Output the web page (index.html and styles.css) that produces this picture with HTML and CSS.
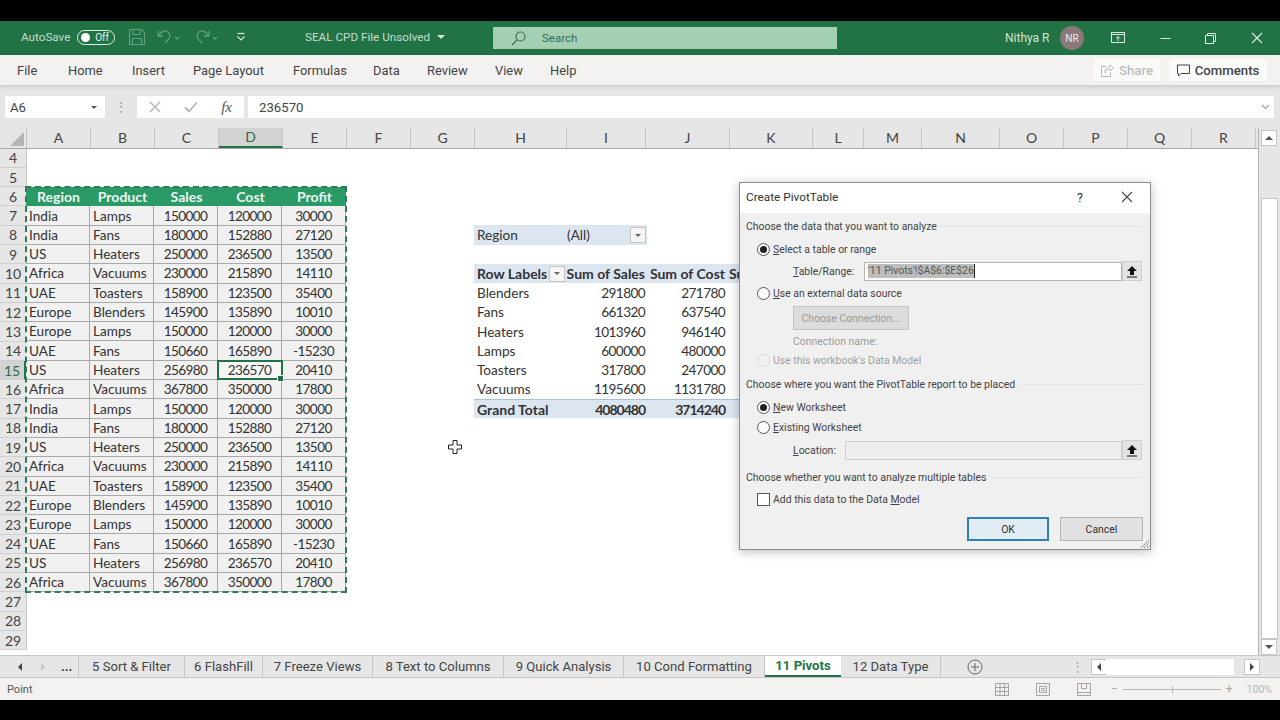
FILE: index.html
```html
<!DOCTYPE html>
<html lang="en">

<head>
    <meta charset="UTF-8">
    <meta name="viewport" content="width=device-width, initial-scale=1.0">
    <title>SEAL CPD File Unsolved - Excel</title>
    <link rel="stylesheet" href="styles.css">
</head>

<body>
    <div class="app">
        <!-- Title bar -->
        <header class="titlebar">
            <div class="qat">
                <span class="autosave">AutoSave</span>
                <span class="toggle"><i class="toggle-dot"></i><b>Off</b></span>
                <svg class="qat-save" width="18" height="18" viewBox="0 0 18 18" fill="none" stroke="#5f9e7d" stroke-width="1.2"><path d="M1.5 1.5h12l3 3v12h-15z"/><path d="M5 1.5v5h7v-5M4.500 16.500v-6h9v6"/></svg>
                <svg class="qat-undo" width="24" height="16" viewBox="0 0 24 16" fill="none" stroke="#5f9e7d" stroke-width="1.3"><path d="M1 2v5h5M1.500 7C4 2 8 1 10.500 2.500c3 2 3 6 .5 8.500l-3 3"/><path d="M18 8l2 2 2-2"/></svg>
                <svg class="qat-redo" width="24" height="16" viewBox="0 0 24 16" fill="none" stroke="#5f9e7d" stroke-width="1.3"><path d="M14 2v5h-5M13.500 7C11 2 7 1 4.500 2.500c-3 2-3 6-.5 8.500l3 3"/><path d="M18 8l2 2 2-2"/></svg>
                <svg class="qat-more" width="10" height="10" viewBox="0 0 10 10" fill="none" stroke="#d5e6dc" stroke-width="1.2"><path d="M1.500 1.500h7"/><path d="M1.500 4.500L5 8l3.500-3.500"/></svg>
            </div>
            <div class="doc-title">SEAL CPD File Unsolved <i class="caret"></i></div>
            <div class="search-box">
                <svg width="15" height="15" viewBox="0 0 15 15" fill="none" stroke="#3f6f55" stroke-width="1.2"><circle cx="9.500" cy="5.500" r="4.500"/><path d="M6 9l-5 5"/></svg>
                <span>Search</span>
            </div>
            <div class="user">
                <span class="user-name">Nithya R</span>
                <span class="avatar">NR</span>
            </div>
            <div class="win-buttons">
                <svg width="14" height="12" viewBox="0 0 14 12" fill="none" stroke="#dbe9e0"><rect x=".5" y=".5" width="13" height="10"/><path d="M.5 2.500h13M7 9V4.500M5 6.500l2-2 2 2"/></svg>
                <svg width="11" height="11" viewBox="0 0 11 11" fill="none" stroke="#dbe9e0"><path d="M.5 5.500h10"/></svg>
                <svg width="11" height="11" viewBox="0 0 11 11" fill="none" stroke="#dbe9e0"><rect x=".5" y="2.500" width="8" height="8"/><path d="M2.500 2.500v-2h8v8h-2"/></svg>
                <svg width="12" height="12" viewBox="0 0 12 12" fill="none" stroke="#e6f0ea" stroke-width="1.1"><path d="M1 1l10 10M11 1L1 11"/></svg>
            </div>
        </header>

        <!-- Ribbon tabs -->
        <nav class="ribbon">
            <ul class="ribbon-tabs">
                <li>File</li>
                <li>Home</li>
                <li>Insert</li>
                <li>Page Layout</li>
                <li>Formulas</li>
                <li>Data</li>
                <li>Review</li>
                <li>View</li>
                <li>Help</li>
            </ul>
            <button class="btn-share">
                <svg width="13" height="13" viewBox="0 0 13 13" fill="none" stroke="#bdbdbd"><path d="M9 .8l3.300 3L9 6.800V5C6 5 4.500 6.500 4 9c-.5-3 1-6 5-6.300z"/><path d="M5 2.500H.5v10h9V8"/></svg>
                Share
            </button>
            <button class="btn-comments">
                <svg width="13" height="13" viewBox="0 0 13 13" fill="none" stroke="#444"><path d="M.5 1h12v8.500H4L1.500 12V9.500h-1z"/></svg>
                Comments
            </button>
        </nav>

        <!-- Formula bar -->
        <div class="formula-area">
            <div class="name-box"><span>A6</span><i class="caret-small"></i></div>
            <div class="formula-dots">&#8942;</div>
            <div class="formula-btns">
                <svg width="12" height="12" viewBox="0 0 12 12" fill="none" stroke="#b5b5b5" stroke-width="1.4"><path d="M1 1l10 10M11 1L1 11"/></svg>
                <svg width="14" height="12" viewBox="0 0 14 12" fill="none" stroke="#b5b5b5" stroke-width="1.800"><path d="M1 6.500L5 10.500 13 1.500"/></svg>
                <span class="fx">fx</span>
            </div>
            <div class="formula-input">
                <span>236570</span>
                <svg width="9" height="6" viewBox="0 0 9 6" fill="none" stroke="#a8a8a8" stroke-width="1.400"><path d="M1 1l3.500 3.500L8 1"/></svg>
            </div>
        </div>

        <!-- Worksheet -->
        <div class="workbook">
            <div class="sheet-wrap">
                <div class="col-heads">
                    <div class="corner"><i></i></div>
                    <div class="col-letters">
                        <span>A</span><span>B</span><span>C</span><span class="current">D</span><span>E</span><span>F</span><span>G</span><span>H</span><span>I</span><span>J</span><span>K</span><span>L</span><span>M</span><span>N</span><span>O</span><span>P</span><span>Q</span><span>R</span>
                    </div>
                </div>
                <div class="sheet-body">
                    <div class="row-heads">
                        <span>4</span><span>5</span><span>6</span><span>7</span><span>8</span><span>9</span><span>10</span><span>11</span><span>12</span><span>13</span><span>14</span><span class="current">15</span><span>16</span><span>17</span><span>18</span><span>19</span><span>20</span><span>21</span><span>22</span><span>23</span><span>24</span><span>25</span><span>26</span><span>27</span><span>28</span><span>29</span>
                    </div>
                    <div class="cells">
                        <div class="data-table">
                            <div class="dt-row dt-head"><span>Region</span><span>Product</span><span>Sales</span><span>Cost</span><span>Profit</span></div>
                            <div class="dt-row"><span>India</span><span>Lamps</span><span>150000</span><span>120000</span><span>30000</span></div>
                            <div class="dt-row"><span>India</span><span>Fans</span><span>180000</span><span>152880</span><span>27120</span></div>
                            <div class="dt-row"><span>US</span><span>Heaters</span><span>250000</span><span>236500</span><span>13500</span></div>
                            <div class="dt-row"><span>Africa</span><span>Vacuums</span><span>230000</span><span>215890</span><span>14110</span></div>
                            <div class="dt-row"><span>UAE</span><span>Toasters</span><span>158900</span><span>123500</span><span>35400</span></div>
                            <div class="dt-row"><span>Europe</span><span>Blenders</span><span>145900</span><span>135890</span><span>10010</span></div>
                            <div class="dt-row"><span>Europe</span><span>Lamps</span><span>150000</span><span>120000</span><span>30000</span></div>
                            <div class="dt-row"><span>UAE</span><span>Fans</span><span>150660</span><span>165890</span><span>-15230</span></div>
                            <div class="dt-row"><span>US</span><span>Heaters</span><span>256980</span><span class="active-cell">236570</span><span>20410</span></div>
                            <div class="dt-row"><span>Africa</span><span>Vacuums</span><span>367800</span><span>350000</span><span>17800</span></div>
                            <div class="dt-row"><span>India</span><span>Lamps</span><span>150000</span><span>120000</span><span>30000</span></div>
                            <div class="dt-row"><span>India</span><span>Fans</span><span>180000</span><span>152880</span><span>27120</span></div>
                            <div class="dt-row"><span>US</span><span>Heaters</span><span>250000</span><span>236500</span><span>13500</span></div>
                            <div class="dt-row"><span>Africa</span><span>Vacuums</span><span>230000</span><span>215890</span><span>14110</span></div>
                            <div class="dt-row"><span>UAE</span><span>Toasters</span><span>158900</span><span>123500</span><span>35400</span></div>
                            <div class="dt-row"><span>Europe</span><span>Blenders</span><span>145900</span><span>135890</span><span>10010</span></div>
                            <div class="dt-row"><span>Europe</span><span>Lamps</span><span>150000</span><span>120000</span><span>30000</span></div>
                            <div class="dt-row"><span>UAE</span><span>Fans</span><span>150660</span><span>165890</span><span>-15230</span></div>
                            <div class="dt-row"><span>US</span><span>Heaters</span><span>256980</span><span>236570</span><span>20410</span></div>
                            <div class="dt-row"><span>Africa</span><span>Vacuums</span><span>367800</span><span>350000</span><span>17800</span></div>
                        </div>

                        <div class="pivot">
                            <div class="pv-row pv-filter"><span>Region</span><span>(All)</span><i class="dd-btn"></i></div>
                            <div class="pv-row"></div>
                            <div class="pv-row pv-head"><span>Row Labels<i class="dd-btn"></i></span><span>Sum of Sales</span><span>Sum of Cost</span><span>Su</span></div>
                            <div class="pv-row"><span>Blenders</span><span>291800</span><span>271780</span></div>
                            <div class="pv-row"><span>Fans</span><span>661320</span><span>637540</span></div>
                            <div class="pv-row"><span>Heaters</span><span>1013960</span><span>946140</span></div>
                            <div class="pv-row"><span>Lamps</span><span>600000</span><span>480000</span></div>
                            <div class="pv-row"><span>Toasters</span><span>317800</span><span>247000</span></div>
                            <div class="pv-row"><span>Vacuums</span><span>1195600</span><span>1131780</span></div>
                            <div class="pv-row pv-total"><span>Grand Total</span><span>4080480</span><span>3714240</span></div>
                        </div>
                    </div>
                </div>
            </div>
            <div class="vscroll">
                <button class="sb-btn"><i class="tri-up"></i></button>
                <div class="vs-track"></div>
                <div class="vs-thumb"></div>
                <button class="sb-btn"><i class="tri-down"></i></button>
            </div>
        </div>

        <!-- Sheet tabs -->
        <div class="tabbar">
            <div class="tab-nav">
                <i class="tri-left"></i><i class="tri-right faint"></i><b>...</b>
            </div>
            <ul class="sheet-tabs">
                <li class="t5">5 Sort &amp; Filter</li>
                <li class="t6">6 FlashFill</li>
                <li class="t7">7 Freeze Views</li>
                <li class="t8">8 Text to Columns</li>
                <li class="t9">9 Quick Analysis</li>
                <li class="t10">10 Cond Formatting</li>
                <li class="t11 active">11 Pivots</li>
                <li class="t12">12 Data Type</li>
            </ul>
            <svg class="add-sheet" width="16" height="16" viewBox="0 0 16 16" fill="none" stroke="#666"><circle cx="8" cy="8" r="7"/><path d="M8 4v8M4 8h8"/></svg>
            <div class="hscroll">
                <span class="hs-dots">&#8942;</span>
                <button class="sb-btn"><i class="tri-left"></i></button>
                <div class="hs-thumb"></div>
                <div class="hs-track"></div>
                <button class="sb-btn"><i class="tri-right"></i></button>
            </div>
        </div>

        <!-- Status bar -->
        <footer class="statusbar">
            <span class="status-text">Point</span>
            <div class="status-right">
                <svg width="14" height="13" viewBox="0 0 14 13" fill="none" stroke="#a3a3a3"><path d="M.5.500h13v12H.5zM.5 4.500h13M.5 8.500h13M5 .5v12M9.500.5v12"/></svg>
                <svg width="14" height="13" viewBox="0 0 14 13" fill="none" stroke="#a3a3a3"><path d="M.5.500h13v12H.5zM3.500 3.500h7v6h-7zM5 5.500h4M5 7.500h4"/></svg>
                <svg width="14" height="13" viewBox="0 0 14 13" fill="none" stroke="#a3a3a3"><path d="M.5.500h13v12H.5zM.5 9.500h13M4.500.5v5h5v-5"/></svg>
                <div class="zoom-slider">
                    <span>&minus;</span><i class="zoom-line"><u></u></i><span>+</span>
                </div>
                <span class="zoom-pct">100%</span>
            </div>
        </footer>

        <!-- Create PivotTable dialog -->
        <div class="dialog">
            <div class="dlg-title">
                <span>Create PivotTable</span>
                <span class="dlg-help">?</span>
                <svg width="12" height="12" viewBox="0 0 12 12" fill="none" stroke="#444" stroke-width="1.100"><path d="M1 1l10 10M11 1L1 11"/></svg>
            </div>
            <div class="dlg-body">
                <div class="dlg-section s1">Choose the data that you want to analyze</div>
                <div class="dlg-opt o1"><i class="radio on"></i><span><u>S</u>elect a table or range</span></div>
                <div class="dlg-field f1">
                    <label><u>T</u>able/Range:</label>
                    <div class="ref-input focus"><span class="selected-ref">'11 Pivots'!$A$6:$E$26</span></div>
                    <button class="ref-btn"><svg width="12" height="13" viewBox="0 0 12 13" fill="#111"><path d="M6 1L1 6h3v4h4V6h3zM1 11.500h10v1H1z"/></svg></button>
                </div>
                <div class="dlg-opt o2"><i class="radio"></i><span><u>U</u>se an external data source</span></div>
                <button class="btn-disabled">Choose Connection...</button>
                <div class="conn-name">Connection name:</div>
                <div class="dlg-opt o3 disabled"><i class="radio"></i><span>Use this workbook's Data Model</span></div>

                <div class="dlg-section s2">Choose where you want the PivotTable report to be placed</div>
                <div class="dlg-opt o4"><i class="radio on"></i><span><u>N</u>ew Worksheet</span></div>
                <div class="dlg-opt o5"><i class="radio"></i><span><u>E</u>xisting Worksheet</span></div>
                <div class="dlg-field f2">
                    <label><u>L</u>ocation:</label>
                    <div class="ref-input blank"></div>
                    <button class="ref-btn"><svg width="12" height="13" viewBox="0 0 12 13" fill="#111"><path d="M6 1L1 6h3v4h4V6h3zM1 11.500h10v1H1z"/></svg></button>
                </div>

                <div class="dlg-section s3">Choose whether you want to analyze multiple tables</div>
                <div class="dlg-opt o6"><i class="check"></i><span>Add this data to the Data <u>M</u>odel</span></div>

                <div class="dlg-actions">
                    <button class="btn-ok">OK</button>
                    <button class="btn-cancel">Cancel</button>
                </div>
            </div>
            <svg class="dlg-grip" width="11" height="11" viewBox="0 0 11 11" stroke="#8f8f8f" stroke-width="1"><path d="M10 2l-8 8M10 5l-5 5M10 8l-2 2"/></svg>
        </div>

        <!-- Mouse pointer -->
        <svg class="pointer" width="14" height="14" viewBox="0 0 14 14" fill="#fff" stroke="#222"><path d="M5 .5h4v4.500h4.500v4H9v4.500H5V9H.5V5H5z"/></svg>
    </div>
</body>

</html>
```

FILE: styles.css
```css
* {
    box-sizing: border-box;
}

html,
body {
    margin: 0;
    height: 100%;
    background-color: #000;
    overflow: hidden;
}

body {
    padding-top: 21px;
    font-family: Roboto, "Open Sans", sans-serif;
    color: #444;
}

ul {
    list-style: none;
    margin: 0;
    padding: 0;
}

button {
    font-family: inherit;
    padding: 0;
}

.app {
    position: relative;
    width: 1280px;
    height: 679px;
    display: flex;
    flex-direction: column;
    background-color: #fff;
}

/* ---- title bar ---- */

.titlebar {
    height: 34px;
    flex: none;
    display: flex;
    align-items: center;
    background-color: #217346;
    color: #c4dccd;
    font-size: 11.700px;
}

.qat {
    width: 305px;
    flex: none;
    display: flex;
    align-items: center;
    padding-left: 21px;
    padding-bottom: 2px;
}

.autosave {
    width: 56px;
}

.toggle {
    width: 38px;
    height: 15px;
    border: 1px solid #e3efe8;
    border-radius: 8px;
    display: flex;
    align-items: center;
    justify-content: space-between;
    padding: 0 5px 0 3px;
    color: #e8f2ec;
    font-size: 10px;
}

.toggle b {
    font-weight: 400;
}

.toggle-dot {
    width: 9px;
    height: 9px;
    border-radius: 50%;
    background-color: #fff;
}

.qat-save {
    margin-left: 13px;
}

.qat-undo {
    margin-left: 11px;
}

.qat-redo {
    margin-left: 14px;
}

.qat-more {
    margin-left: 17px;
}

.doc-title {
    width: 188px;
    flex: none;
    white-space: nowrap;
    padding-bottom: 2px;
}

.caret {
    display: inline-block;
    margin-left: 4px;
    vertical-align: 2px;
    border-left: 4px solid transparent;
    border-right: 4px solid transparent;
    border-top: 4px solid #d5e6dc;
}

.search-box {
    width: 344px;
    height: 22px;
    flex: none;
    display: flex;
    align-items: center;
    gap: 16px;
    padding-left: 18px;
    background-color: #a3d0b2;
    color: #3f6b52;
    font-size: 11.500px;
}

.user {
    width: 247px;
    padding-left: 168px;
    flex: none;
    display: flex;
    align-items: center;
    justify-content: space-between;
}

.user-name {
    color: #cfe3d7;
    font-size: 12px;
    white-space: nowrap;
}

.avatar {
    width: 24px;
    height: 24px;
    border-radius: 50%;
    background-color: #8b7878;
    color: #eee;
    font-size: 10px;
    display: flex;
    align-items: center;
    justify-content: center;
}

.win-buttons {
    flex: 1;
    display: flex;
    align-items: center;
    justify-content: space-between;
    padding: 0 17px 0 27px;
}

/* ---- ribbon ---- */

.ribbon {
    height: 30px;
    flex: none;
    display: flex;
    align-items: center;
    background-color: #f3f2f1;
    box-shadow: 0 2px 4px rgba(0, 0, 0, .12);
    z-index: 1;
    font-size: 12.900px;
    color: #444;
}

.ribbon-tabs {
    display: flex;
    width: 1094px;
    padding-left: 17px;
}

.ribbon-tabs li:nth-child(1) {
    width: 51px;
}

.ribbon-tabs li:nth-child(2) {
    width: 64px;
}

.ribbon-tabs li:nth-child(3) {
    width: 61px;
}

.ribbon-tabs li:nth-child(4) {
    width: 100px;
}

.ribbon-tabs li:nth-child(5) {
    width: 80px;
}

.ribbon-tabs li:nth-child(6) {
    width: 54px;
}

.ribbon-tabs li:nth-child(7) {
    width: 68px;
}

.ribbon-tabs li:nth-child(8) {
    width: 55px;
}

.btn-share,
.btn-comments {
    height: 22px;
    display: flex;
    align-items: center;
    justify-content: center;
    gap: 5px;
    border: 0;
    background-color: #fafaf9;
    font-size: 13.200px;
    font-weight: 500;
}

.btn-share {
    width: 66px;
    color: #bdbdbd;
}

.btn-comments {
    width: 98px;
    margin-left: 9px;
    color: #444;
}

/* ---- formula bar ---- */

.formula-area {
    height: 43px;
    flex: none;
    display: flex;
    align-items: center;
    padding: 1px 6px 0 5px;
    background-color: #e6e6e6;
    font-size: 13.200px;
}

.name-box {
    width: 100px;
    height: 22px;
    display: flex;
    align-items: center;
    justify-content: space-between;
    padding: 0 8px 0 5px;
    background-color: #fff;
}

.caret-small {
    border-left: 3px solid transparent;
    border-right: 3px solid transparent;
    border-top: 3px solid #555;
}

.formula-dots {
    width: 32px;
    text-align: center;
    color: #aaa;
    font-size: 14px;
}

.formula-btns {
    width: 107px;
    height: 22px;
    display: flex;
    align-items: center;
    justify-content: space-between;
    padding: 0 12px 0 12px;
    background-color: #fff;
}

.fx {
    font-family: "Liberation Serif", serif;
    font-style: italic;
    font-size: 15px;
    color: #555;
}

.formula-input {
    flex: 1;
    height: 22px;
    margin-left: 4px;
    display: flex;
    align-items: center;
    justify-content: space-between;
    padding: 0 4px 0 11px;
    background-color: #fff;
    color: #444;
}

/* ---- worksheet ---- */

.workbook {
    height: 527px;
    flex: none;
    display: flex;
    background-color: #e6e6e6;
}

.sheet-wrap {
    width: 1259px;
    flex: none;
    overflow: hidden;
    border-right: 1px solid #b5b5b5;
}

.col-heads {
    height: 20.6px;
    display: flex;
    border-bottom: 1px solid #a8a8a8;
    background-color: #e6e6e6;
}

.corner {
    width: 27px;
    flex: none;
    display: flex;
    align-items: flex-end;
    justify-content: flex-end;
    padding: 0 2px 2px 0;
    border-right: 1px solid #c6c6c6;
}

.corner i {
    width: 0;
    height: 0;
    border-left: 14px solid transparent;
    border-bottom: 14px solid #b5b5b5;
}

.col-letters {
    display: grid;
    grid-template-columns: repeat(7, 64px) 92px 79px 84px 83px 51px 58px 78px repeat(4, 64px);
}

.col-letters span {
    display: flex;
    align-items: center;
    justify-content: center;
    font-family: Lato, sans-serif;
    font-size: 14px;
    color: #444;
    border-right: 1px solid #c6c6c6;
}

.col-letters .current {
    background-color: #d2d2d2;
    border-bottom: 2px solid #217346;
    color: #2f6b4a;
}

.sheet-body {
    display: flex;
    height: 506.400px;
    background-color: #fff;
}

.row-heads {
    width: 27px;
    flex: none;
    display: grid;
    grid-auto-rows: 19.300px;
    align-content: start;
    height: 501.800px;
    background-color: #e6e6e6;
    border-right: 1px solid #c6c6c6;
}

.row-heads span {
    display: flex;
    align-items: center;
    justify-content: center;
    font-family: Lato, sans-serif;
    font-size: 14px;
    color: #444;
    border-bottom: 1px solid #cfcfcf;
}

.row-heads .current {
    background-color: #d2d2d2;
    border-right: 2px solid #217346;
    color: #2f6b4a;
}

.cells {
    flex: 1;
    display: flex;
    align-items: flex-start;
    padding-top: 38.500px;
    font-family: Lato, sans-serif;
    font-size: 13.600px;
    color: #333;
}

/* source table */

.data-table {
    width: 320px;
    flex: none;
    margin-left: -1px;
    outline: 2px dashed #2f7d58;
    outline-offset: -1px;
    background-color: #f1f1f1;
}

.dt-row {
    height: 19.300px;
    display: grid;
    grid-template-columns: repeat(5, 64px);
    border-bottom: 1px solid #a8a8a8;
}

.dt-row span {
    display: flex;
    align-items: center;
    justify-content: center;
    border-right: 1px solid #a8a8a8;
}

.dt-row span:nth-child(-n+2) {
    justify-content: flex-start;
    padding-left: 3px;
}

/* Lato digits are wider than the sheet font */
.dt-row span:nth-child(n+3) {
    letter-spacing: -.6px;
}

.dt-head {
    background-color: #2a9a66;
    border-bottom: 0;
    color: #eef7f2;
    font-size: 14px;
    font-weight: 700;
}

.dt-head span,
.dt-head span:nth-child(-n+2),
.dt-head span:nth-child(n+3) {
    justify-content: center;
    padding-left: 1px;
    border-right: 0;
    letter-spacing: 0;
}

.active-cell {
    position: relative;
    outline: 2px solid #217346;
    outline-offset: -1px;
    background-color: #f7f7f7;
}

.active-cell::after {
    content: "";
    position: absolute;
    right: -3px;
    bottom: -3px;
    width: 5px;
    height: 5px;
    background-color: #217346;
    border: 1px solid #fff;
}

/* pivot table */

.pivot {
    width: 265px;
    margin-left: 128px;
    margin-top: 38.300px;
    flex: none;
}

.pv-row {
    height: 19.300px;
    display: grid;
    grid-template-columns: 91px 80px 80px 14px;
    align-items: center;
    overflow: hidden;
}

.pv-row span:nth-child(1) {
    padding-left: 3px;
    display: flex;
    align-items: center;
    justify-content: space-between;
}

.pv-row span:nth-child(2),
.pv-row span:nth-child(3) {
    text-align: right;
    letter-spacing: -.6px;
}

.pv-filter {
    width: 173px;
    grid-template-columns: 93px 63px 17px;
    background-color: #dce6f1;
}

.pv-row.pv-filter span:nth-child(2) {
    text-align: left;
    letter-spacing: 0;
}

.pv-head {
    background-color: #dce6f1;
    font-size: 14px;
    font-weight: 700;
}

.pv-head span {
    white-space: nowrap;
}

.pv-row.pv-head span:nth-child(n+2) {
    letter-spacing: 0;
}

.pv-head span:nth-child(4) {
    padding-left: 4px;
}

.pv-total {
    background-color: #dce6f1;
    border-top: 1px solid #a9c0da;
    font-size: 14px;
    font-weight: 700;
}

.pv-row.pv-total span:nth-child(n+2) {
    letter-spacing: -1px;
}

.dd-btn {
    width: 16px;
    height: 16px;
    flex: none;
    display: flex;
    align-items: center;
    justify-content: center;
    background-color: #f5f5f5;
    border: 1px solid #c4c4c4;
}

.dd-btn::after {
    content: "";
    border-left: 3px solid transparent;
    border-right: 3px solid transparent;
    border-top: 3px solid #666;
}

/* ---- scroll bars ---- */

.vscroll {
    flex: 1;
    display: flex;
    flex-direction: column;
    padding: 2px 2px 0;
    background-color: #e6e6e6;
}

.vs-track {
    height: 52px;
    flex: none;
}

.vs-thumb {
    flex: 1;
    background-color: #fff;
    border: 1px solid #c6c6c6;
}

.sb-btn {
    width: 16px;
    height: 16px;
    flex: none;
    display: flex;
    align-items: center;
    justify-content: center;
    background-color: #fff;
    border: 1px solid #c6c6c6;
}

.tri-up,
.tri-down {
    border-left: 4px solid transparent;
    border-right: 4px solid transparent;
}

.tri-up {
    border-bottom: 4px solid #555;
}

.tri-down {
    border-top: 4px solid #555;
}

.tri-left,
.tri-right {
    border-top: 4px solid transparent;
    border-bottom: 4px solid transparent;
}

.tri-left {
    border-right: 4px solid #444;
}

.tri-right {
    border-left: 4px solid #444;
}

.tri-right.faint {
    border-left-color: #c8c8c8;
}

/* ---- sheet tabs ---- */

.tabbar {
    height: 23px;
    flex: none;
    display: flex;
    align-items: center;
    background-color: #e6e6e6;
    border-top: 1px solid #c6c6c6;
    border-bottom: 1px solid #c6c6c6;
    font-size: 13.100px;
}

.tab-nav {
    width: 79px;
    flex: none;
    display: flex;
    align-items: center;
    padding-left: 18px;
    gap: 19px;
    border-right: 1px solid #c6c6c6;
    height: 100%;
}

.tab-nav b {
    margin-left: -3px;
    color: #333;
}

.sheet-tabs {
    display: flex;
    height: 100%;
    width: 862px;
}

.sheet-tabs li {
    display: flex;
    align-items: center;
    justify-content: center;
    border-right: 1px solid #c6c6c6;
    white-space: nowrap;
    color: #444;
}

.t5 {
    width: 106px;
}

.t6 {
    width: 78px;
}

.t7 {
    width: 110px;
}

.t8 {
    width: 131px;
}

.t9 {
    width: 120px;
}

.t10 {
    width: 141px;
}

.sheet-tabs .t11 {
    width: 76px;
    height: 21px;
    background-color: #fff;
    border-right: 0;
    border-bottom: 2px solid #217346;
    color: #217346;
    font-weight: 700;
}

.t12 {
    width: 100px;
}

.add-sheet {
    margin-left: 26px;
    flex: none;
}

.hscroll {
    display: flex;
    align-items: center;
    margin-left: 88px;
}

.hs-dots {
    width: 20px;
    color: #aaa;
    font-size: 13px;
}

.hs-thumb {
    width: 128px;
    height: 16px;
    background-color: #fff;
    margin-left: -1px;
}

.hs-track {
    width: 10px;
}

/* ---- status bar ---- */

.statusbar {
    height: 21px;
    flex: 1;
    display: flex;
    align-items: center;
    justify-content: space-between;
    padding: 0 8px 0 7px;
    background-color: #f3f2f1;
    font-size: 11px;
    color: #555;
}

.status-right {
    display: flex;
    align-items: center;
    gap: 27px;
}

.zoom-slider {
    display: flex;
    align-items: center;
    gap: 5px;
    margin-left: -7px;
    color: #aaa;
    font-size: 12px;
}

.zoom-line {
    position: relative;
    display: block;
    width: 98px;
    height: 1px;
    background-color: #b5b5b5;
}

.zoom-line u {
    position: absolute;
    left: 49px;
    top: -3px;
    width: 1px;
    height: 7px;
    background-color: #b5b5b5;
}

.zoom-pct {
    margin-left: -13px;
    color: #b5b5b5;
    font-size: 10.500px;
}

/* ---- dialog ---- */

.dialog {
    position: absolute;
    left: 739px;
    top: 161px;
    width: 412px;
    height: 368px;
    display: flex;
    flex-direction: column;
    background-color: #f0f0f0;
    border: 1px solid #8c8c8c;
    box-shadow: 0 2px 10px rgba(0, 0, 0, .25);
    font-size: 10.450px;
    color: #444;
}

.dlg-title {
    height: 30px;
    flex: none;
    display: flex;
    align-items: center;
    padding: 0 17px 2px 6px;
    background-color: #fff;
    font-size: 11.800px;
    color: #333;
}

.dlg-help {
    margin-left: auto;
    margin-right: 38px;
    font-size: 12.500px;
}

.dlg-body {
    flex: 1;
    padding: 0 7px 0 6px;
}

.dlg-section {
    display: flex;
    align-items: center;
    gap: 6px;
    height: 14px;
    white-space: nowrap;
}

.dlg-section::after {
    content: "";
    flex: 1;
    height: 1px;
    background-color: #e2e2e2;
}

.s1 {
    margin-top: 6px;
}

.s2 {
    margin-top: 10px;
}

.s3 {
    margin-top: 10px;
}

.dlg-opt {
    display: flex;
    align-items: center;
    gap: 3px;
    height: 14px;
    padding-left: 11px;
}

.o1 {
    margin-top: 9px;
}

.o2 {
    margin-top: 5px;
}

.o3 {
    margin-top: 4px;
}

.o4 {
    margin-top: 9px;
}

.o5 {
    margin-top: 6px;
}

.o6 {
    margin-top: 8px;
}

.disabled {
    color: #a0a0a0;
}

.radio {
    width: 13px;
    height: 13px;
    flex: none;
    border: 1px solid #555;
    border-radius: 50%;
    background-color: #fff;
    display: flex;
    align-items: center;
    justify-content: center;
}

.radio.on::after {
    content: "";
    width: 7px;
    height: 7px;
    border-radius: 50%;
    background-color: #222;
}

.disabled .radio {
    border-color: #d8d8d8;
    background-color: #f0f0f0;
}

.check {
    width: 13px;
    height: 13px;
    flex: none;
    border: 1px solid #555;
    background-color: #fff;
}

.dlg-field {
    display: flex;
    align-items: center;
    height: 20px;
    margin-right: 1px;
}

.dlg-field label {
    padding-left: 47px;
    flex: none;
}

.f1 {
    margin-top: 5px;
}

.f1 label {
    width: 118px;
}

.f2 {
    margin-top: 6px;
}

.f2 label {
    width: 99px;
}

.ref-input {
    flex: 1;
    height: 19px;
    display: flex;
    align-items: center;
    padding-left: 3px;
    background-color: #fff;
    border: 1px solid #b5b5b5;
}

.ref-input.blank {
    background-color: #eeeeee;
    border-color: #d0d0d0;
}

.selected-ref {
    background-color: #bdbdbd;
    color: #555;
    border-right: 1px solid #222;
    line-height: 14px;
}

.ref-btn {
    width: 20px;
    height: 20px;
    flex: none;
    display: flex;
    align-items: center;
    justify-content: center;
    background-color: #e4e4e4;
    border: 1px solid #cfcfcf;
}

.btn-disabled {
    display: block;
    width: 116px;
    height: 24px;
    margin: 6px 0 0 47px;
    font-size: 10.450px;
    background-color: #dcdcdc;
    border: 1px solid #c4c4c4;
    color: #9a9a9a;
}

.conn-name {
    height: 14px;
    margin: 5px 0 0 47px;
    color: #9a9a9a;
}

.dlg-actions {
    display: flex;
    justify-content: flex-end;
    gap: 11px;
    margin-top: 11px;
}

.dlg-actions button {
    width: 83px;
    height: 24px;
    font-size: 10.450px;
    color: #333;
}

.dlg-actions .btn-ok {
    width: 82px;
    background-color: #e1ecf4;
    border: 2px solid #2f7fb8;
}

.btn-cancel {
    background-color: #e1e1e1;
    border: 1px solid #b5b5b5;
}

.dlg-grip {
    position: absolute;
    right: 0;
    bottom: 0;
}

.pointer {
    position: absolute;
    left: 448px;
    top: 419px;
}
```
